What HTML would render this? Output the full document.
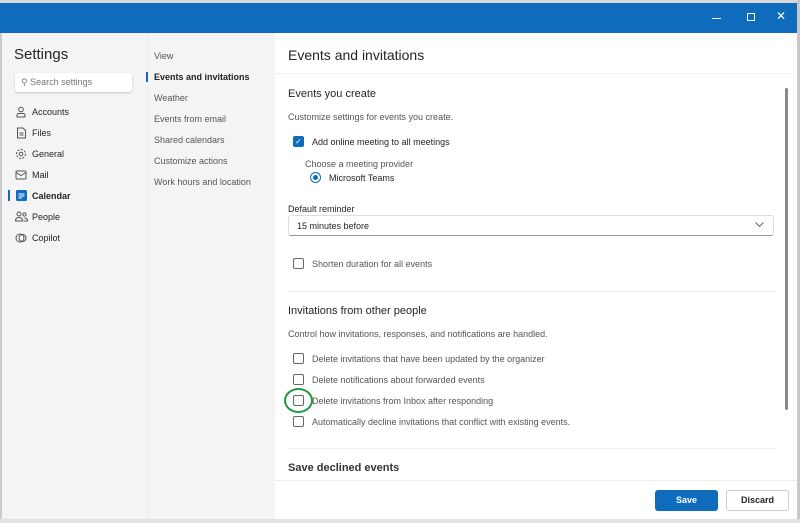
<!DOCTYPE html>
<html><head><meta charset="utf-8"><style>
*{margin:0;padding:0;box-sizing:border-box}
body{width:800px;height:523px;overflow:hidden;background:#f4f4f4;font-family:"Liberation Sans",sans-serif;color:#242424;position:relative}
.a{position:absolute;white-space:nowrap}
.t{font-size:9px}
.g{color:#555}
.cb{position:absolute;width:11px;height:11px;border:1px solid #666;border-radius:2px;background:#fff}
svg{position:absolute}
</style></head><body>
<div class="a" style="left:0;top:0;width:800px;height:3px;background:#d8d8d8"></div>
<div class="a" style="left:0;top:3px;width:797px;height:30px;background:#0f6cbd"></div>
<div class="a" style="left:712px;top:18px;width:9px;height:1px;background:#fff"></div>
<div class="a" style="left:747px;top:13px;width:8px;height:8px;border:1px solid #fff"></div>
<div class="a" style="left:776px;top:9px;color:#fff;font-size:12px">✕</div>
<div class="a" style="left:797px;top:0;width:3px;height:523px;background:#c8c8c8"></div>
<div class="a" style="left:0;top:33px;width:2px;height:490px;background:#ccc"></div>
<div class="a" style="left:0;top:519px;width:800px;height:4px;background:#e2e2e2"></div>

<div class="a" style="left:14px;top:46px;font-size:15px">Settings</div>
<div class="a" style="left:15px;top:73px;width:117px;height:19px;background:#fff;border-radius:3px;box-shadow:0 1px 2px rgba(0,0,0,.2)"></div>
<div class="a t" style="left:21px;top:77px;color:#777"><span style="font-size:9px">⚲</span>&nbsp;Search settings</div>

<svg style="left:15px;top:106px" width="12" height="12" viewBox="0 0 12 12" fill="none" stroke="#555"><circle cx="6" cy="3.5" r="2.3"/><path d="M2 11V9.5Q2 7.5 4 7.5H8Q10 7.5 10 9.5V11Z"/></svg>
<div class="a t" style="left:32px;top:107px">Accounts</div>
<svg style="left:16px;top:127px" width="11" height="12" viewBox="0 0 11 12" fill="none" stroke="#555"><path d="M1.5 1H7L9.5 3.5V11H1.5Z"/><path d="M3.5 6H7.5M3.5 8H7.5"/></svg>
<div class="a t" style="left:32px;top:128px">Files</div>
<svg style="left:15px;top:148px" width="12" height="12" viewBox="0 0 12 12" fill="none" stroke="#555"><circle cx="6" cy="6" r="1.8"/><circle cx="6" cy="6" r="4.5" stroke-dasharray="2 1.5"/></svg>
<div class="a t" style="left:32px;top:149px">General</div>
<svg style="left:15px;top:170px" width="12" height="10" viewBox="0 0 12 10" fill="none" stroke="#555"><rect x="1" y="1" width="10" height="8" rx="1"/><path d="M1 2.5L6 5.5L11 2.5"/></svg>
<div class="a t" style="left:32px;top:170px">Mail</div>
<div class="a" style="left:8px;top:190px;width:2px;height:11px;background:#0f6cbd"></div>
<svg style="left:16px;top:190px" width="11" height="11" viewBox="0 0 11 11"><rect x="0" y="0" width="11" height="11" rx="1.5" fill="#0f6cbd"/><path d="M2.5 4H8.5M2.5 6H8.5M2.5 8H6" stroke="#fff"/></svg>
<div class="a t" style="left:32px;top:191px;font-weight:bold">Calendar</div>
<svg style="left:15px;top:211px" width="13" height="11" viewBox="0 0 13 11" fill="none" stroke="#555"><circle cx="4" cy="3" r="2"/><circle cx="9.5" cy="3.5" r="1.6"/><path d="M0.5 10Q0.5 6.5 4 6.5Q7.5 6.5 7.5 10ZM8.5 10H12.5Q12.5 7 9.5 7"/></svg>
<div class="a t" style="left:32px;top:212px">People</div>
<svg style="left:15px;top:232px" width="12" height="12" viewBox="0 0 12 12" fill="none" stroke="#555"><circle cx="5" cy="6" r="4"/><circle cx="7.5" cy="6" r="3.5"/></svg>
<div class="a t" style="left:32px;top:233px">Copilot</div>

<div class="a" style="left:147px;top:33px;width:1px;height:486px;background:#ececec"></div>
<div class="a t g" style="left:154px;top:51px">View</div>
<div class="a" style="left:146px;top:72px;width:2px;height:10px;background:#0f6cbd"></div>
<div class="a t" style="left:154px;top:72px;font-weight:bold">Events and invitations</div>
<div class="a t g" style="left:154px;top:93px">Weather</div>
<div class="a t g" style="left:154px;top:114px">Events from email</div>
<div class="a t g" style="left:154px;top:135px">Shared calendars</div>
<div class="a t g" style="left:154px;top:156px">Customize actions</div>
<div class="a t g" style="left:154px;top:177px">Work hours and location</div>

<div class="a" style="left:275px;top:33px;width:522px;height:486px;background:#fff"></div>
<div class="a" style="left:288px;top:47px;font-size:14px">Events and invitations</div>
<div class="a" style="left:275px;top:73px;width:517px;height:1px;background:#eee"></div>
<div class="a" style="left:785px;top:88px;width:3px;height:322px;background:#888;border-radius:2px"></div>
<div class="a" style="left:288px;top:88px;font-size:11px">Events you create</div>
<div class="a t g" style="left:288px;top:112px">Customize settings for events you create.</div>
<div class="a" style="left:293px;top:136px;width:11px;height:11px;background:#0f6cbd;border-radius:2px;color:#fff;font-size:8px;text-align:center;line-height:11px">✓</div>
<div class="a t" style="left:312px;top:137px">Add online meeting to all meetings</div>
<div class="a t g" style="left:305px;top:159px">Choose a meeting provider</div>
<div class="a" style="left:310px;top:172px;width:11px;height:11px;border:1px solid #0f6cbd;border-radius:50%"></div>
<div class="a" style="left:313px;top:175px;width:5px;height:5px;background:#0f6cbd;border-radius:50%"></div>
<div class="a t" style="left:329px;top:173px">Microsoft Teams</div>
<div class="a t" style="left:288px;top:204px">Default reminder</div>
<div class="a" style="left:288px;top:215px;width:486px;height:21px;border:1px solid #ddd;border-bottom-color:#999;border-radius:3px"></div>
<div class="a t" style="left:297px;top:221px">15 minutes before</div>
<svg style="left:755px;top:222px" width="9" height="6" viewBox="0 0 9 6" fill="none" stroke="#666"><path d="M0.5 0.5L4.5 4.5L8.5 0.5"/></svg>
<div class="cb" style="left:293px;top:258px"></div>
<div class="a t g" style="left:312px;top:259px">Shorten duration for all events</div>
<div class="a" style="left:288px;top:291px;width:488px;height:1px;background:#eee"></div>
<div class="a" style="left:288px;top:305px;font-size:11px">Invitations from other people</div>
<div class="a t g" style="left:288px;top:329px">Control how invitations, responses, and notifications are handled.</div>
<div class="cb" style="left:293px;top:353px"></div>
<div class="a t g" style="left:312px;top:354px">Delete invitations that have been updated by the organizer</div>
<div class="cb" style="left:293px;top:374px"></div>
<div class="a t g" style="left:312px;top:375px">Delete notifications about forwarded events</div>
<div class="cb" style="left:293px;top:395px"></div>
<div class="a t g" style="left:312px;top:396px">Delete invitations from Inbox after responding</div>
<div class="a" style="left:284px;top:388px;width:29px;height:25px;border:2.5px solid #1e9a3c;border-radius:50%"></div>
<div class="cb" style="left:293px;top:416px"></div>
<div class="a t g" style="left:312px;top:417px">Automatically decline invitations that conflict with existing events.</div>
<div class="a" style="left:288px;top:448px;width:488px;height:1px;background:#eee"></div>
<div class="a" style="left:288px;top:462px;font-size:11px;font-weight:bold;color:#333">Save declined events</div>
<div class="a" style="left:275px;top:480px;width:522px;height:1px;background:#eee"></div>
<div class="a" style="left:655px;top:490px;width:63px;height:21px;background:#0f6cbd;border-radius:3px;color:#fff;font-size:9px;font-weight:bold;text-align:center;line-height:21px">Save</div>
<div class="a" style="left:726px;top:490px;width:63px;height:21px;border:1px solid #ccc;border-radius:3px;font-size:9px;font-weight:bold;text-align:center;line-height:19px">Discard</div>
</body></html>
